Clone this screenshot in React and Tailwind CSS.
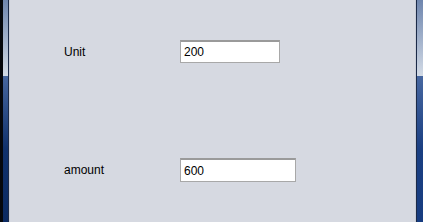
export default function App() {
  const font = { fontFamily: '"Liberation Sans", Arial, sans-serif' };
  return (
    <div className="flex h-[222px] w-[423px] overflow-hidden bg-[#d6d9e1]" style={font}>
      <div className="w-[3px] bg-[#05070c]" />
      <div className="flex w-[5px] flex-col">
        <div className="h-[76px] bg-gradient-to-b from-[#6f86ae] to-[#d3dbe6]" />
        <div className="flex-1 bg-gradient-to-b from-[#4767a0] via-[#10316c] to-[#0b2a62]" />
      </div>
      <div className="w-[1px] bg-[#1b2a48]" />
      <div className="w-[1px] bg-[#c9cdd7]" />
      <div className="flex flex-1 flex-col pt-[40px] text-[12px] text-black">
        <div className="flex h-[23px] items-center">
          <span className="ml-[54px] w-[116px]">Unit</span>
          <div className="flex h-[23px] w-[100px] items-center border border-[#a8a8a8] border-t-2 border-t-[#9a9a9a] bg-white pl-[3px]">
            200
          </div>
        </div>
        <div className="mt-[95px] flex h-[24px] items-center">
          <span className="ml-[54px] w-[116px]">amount</span>
          <div className="flex h-[24px] w-[116px] items-center border border-[#a8a8a8] border-t-2 border-t-[#9a9a9a] bg-white pl-[3px]">
            600
          </div>
        </div>
      </div>
      <div className="w-[1px] bg-[#c9cdd7]" />
      <div className="w-[1px] bg-[#1b2a48]" />
      <div className="flex w-[6px] flex-col">
        <div className="h-[76px] bg-gradient-to-b from-[#6f86ae] to-[#d3dbe6]" />
        <div className="flex-1 bg-gradient-to-b from-[#4767a0] via-[#1a3f82] to-[#173c80]" />
      </div>
    </div>
  );
}
